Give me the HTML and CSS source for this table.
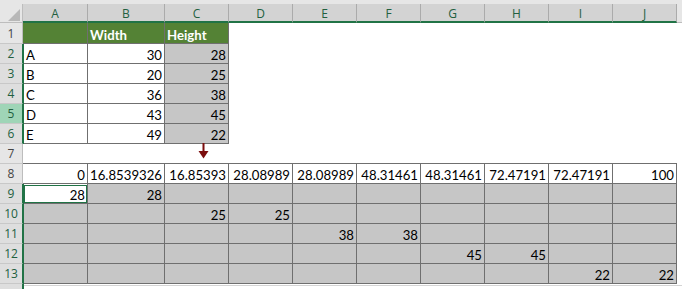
FILE: index.html
```html
<!DOCTYPE html>
<html lang="en">
<head>
    <meta charset="UTF-8">
    <meta name="viewport" content="width=device-width, initial-scale=1.0">
    <title>Planilha</title>
    <link rel="stylesheet" href="styles.css">
</head>
<body>
    <div class="planilha">
        <div class="faixa"></div>

        <!-- cabecalho das colunas -->
        <div class="canto"><span class="triangulo"></span></div>
        <div class="col-titulo">A</div>
        <div class="col-titulo">B</div>
        <div class="col-titulo">C</div>
        <div class="col-titulo">D</div>
        <div class="col-titulo">E</div>
        <div class="col-titulo">F</div>
        <div class="col-titulo">G</div>
        <div class="col-titulo">H</div>
        <div class="col-titulo">I</div>
        <div class="col-titulo">J</div>
        <div class="col-fim"></div>

        <!-- linha 1 -->
        <div class="lin-titulo">1</div>
        <div class="celula borda verde"></div>
        <div class="celula borda verde">Width</div>
        <div class="celula borda verde">Height</div>
        <div class="celula"></div><div class="celula"></div><div class="celula"></div><div class="celula"></div>
        <div class="celula"></div><div class="celula"></div><div class="celula"></div>
        <div class="celula"></div>

        <!-- linhas 2 a 6 -->
        <div class="lin-titulo sel">2</div>
        <div class="celula borda">A</div>
        <div class="celula borda num">30</div>
        <div class="celula borda num selecao">28</div>
        <div class="celula"></div><div class="celula"></div><div class="celula"></div><div class="celula"></div>
        <div class="celula"></div><div class="celula"></div><div class="celula"></div>
        <div class="celula"></div>

        <div class="lin-titulo sel">3</div>
        <div class="celula borda">B</div>
        <div class="celula borda num">20</div>
        <div class="celula borda num selecao">25</div>
        <div class="celula"></div><div class="celula"></div><div class="celula"></div><div class="celula"></div>
        <div class="celula"></div><div class="celula"></div><div class="celula"></div>
        <div class="celula"></div>

        <div class="lin-titulo sel">4</div>
        <div class="celula borda">C</div>
        <div class="celula borda num">36</div>
        <div class="celula borda num selecao">38</div>
        <div class="celula"></div><div class="celula"></div><div class="celula"></div><div class="celula"></div>
        <div class="celula"></div><div class="celula"></div><div class="celula"></div>
        <div class="celula"></div>

        <div class="lin-titulo sel destaque">5</div>
        <div class="celula borda">D</div>
        <div class="celula borda num">43</div>
        <div class="celula borda num selecao">45</div>
        <div class="celula"></div><div class="celula"></div><div class="celula"></div><div class="celula"></div>
        <div class="celula"></div><div class="celula"></div><div class="celula"></div>
        <div class="celula"></div>

        <div class="lin-titulo sel">6</div>
        <div class="celula borda">E</div>
        <div class="celula borda num">49</div>
        <div class="celula borda num selecao">22</div>
        <div class="celula"></div><div class="celula"></div><div class="celula"></div><div class="celula"></div>
        <div class="celula"></div><div class="celula"></div><div class="celula"></div>
        <div class="celula"></div>

        <!-- linha 7 (vazia) -->
        <div class="lin-titulo">7</div>
        <div class="celula base"></div><div class="celula base"></div><div class="celula base"></div>
        <div class="celula base"></div><div class="celula base"></div><div class="celula base"></div>
        <div class="celula base"></div><div class="celula base"></div><div class="celula base"></div>
        <div class="celula base"></div>
        <div class="celula"></div>

        <!-- linha 8 -->
        <div class="lin-titulo">8</div>
        <div class="celula borda num">0</div>
        <div class="celula borda num">16.8539326</div>
        <div class="celula borda num">16.85393</div>
        <div class="celula borda num">28.08989</div>
        <div class="celula borda num">28.08989</div>
        <div class="celula borda num">48.31461</div>
        <div class="celula borda num">48.31461</div>
        <div class="celula borda num">72.47191</div>
        <div class="celula borda num">72.47191</div>
        <div class="celula borda num">100</div>
        <div class="celula"></div>

        <!-- linhas 9 a 13 -->
        <div class="lin-titulo sel">9</div>
        <div class="celula borda num ativa">28</div>
        <div class="celula borda num selecao">28</div>
        <div class="celula borda num selecao"></div>
        <div class="celula borda num selecao"></div>
        <div class="celula borda num selecao"></div>
        <div class="celula borda num selecao"></div>
        <div class="celula borda num selecao"></div>
        <div class="celula borda num selecao"></div>
        <div class="celula borda num selecao"></div>
        <div class="celula borda num selecao"></div>
        <div class="celula"></div>

        <div class="lin-titulo sel">10</div>
        <div class="celula borda num selecao"></div>
        <div class="celula borda num selecao"></div>
        <div class="celula borda num selecao">25</div>
        <div class="celula borda num selecao">25</div>
        <div class="celula borda num selecao"></div>
        <div class="celula borda num selecao"></div>
        <div class="celula borda num selecao"></div>
        <div class="celula borda num selecao"></div>
        <div class="celula borda num selecao"></div>
        <div class="celula borda num selecao"></div>
        <div class="celula"></div>

        <div class="lin-titulo sel">11</div>
        <div class="celula borda num selecao"></div>
        <div class="celula borda num selecao"></div>
        <div class="celula borda num selecao"></div>
        <div class="celula borda num selecao"></div>
        <div class="celula borda num selecao">38</div>
        <div class="celula borda num selecao">38</div>
        <div class="celula borda num selecao"></div>
        <div class="celula borda num selecao"></div>
        <div class="celula borda num selecao"></div>
        <div class="celula borda num selecao"></div>
        <div class="celula"></div>

        <div class="lin-titulo sel">12</div>
        <div class="celula borda num selecao"></div>
        <div class="celula borda num selecao"></div>
        <div class="celula borda num selecao"></div>
        <div class="celula borda num selecao"></div>
        <div class="celula borda num selecao"></div>
        <div class="celula borda num selecao"></div>
        <div class="celula borda num selecao">45</div>
        <div class="celula borda num selecao">45</div>
        <div class="celula borda num selecao"></div>
        <div class="celula borda num selecao"></div>
        <div class="celula"></div>

        <div class="lin-titulo sel">13</div>
        <div class="celula borda num selecao"></div>
        <div class="celula borda num selecao"></div>
        <div class="celula borda num selecao"></div>
        <div class="celula borda num selecao"></div>
        <div class="celula borda num selecao"></div>
        <div class="celula borda num selecao"></div>
        <div class="celula borda num selecao"></div>
        <div class="celula borda num selecao"></div>
        <div class="celula borda num selecao">22</div>
        <div class="celula borda num selecao">22</div>
        <div class="celula"></div>

        <!-- inicio da linha 14, cortada -->
        <div class="lin-titulo sel rodape-titulo"></div>
        <div class="rodape"></div>

        <svg class="seta" width="11" height="16" viewBox="0 0 11 16">
            <rect x="4.5" y="0" width="2" height="9" fill="#7b0d0d"/>
            <polygon points="0.5,8 10.5,8 5.5,15.5" fill="#7b0d0d"/>
        </svg>
    </div>
</body>
</html>
```

FILE: styles.css
```css
* {
    box-sizing: border-box;
    margin: 0;
    padding: 0;
}

body {
    background-color: #fff;
    overflow: hidden;
}

.planilha {
    position: relative;
    display: grid;
    grid-template-columns: 23px 65px 77px repeat(8, 64px) 5px;
    grid-template-rows: 4px 19px 21px repeat(12, 20px) 5px;
    width: 682px;
    height: 289px;
    font-family: 'Lato', 'Liberation Sans', sans-serif;
    font-size: 13.2px;
    color: #000;
}

.faixa {
    grid-column: 1 / -1;
    background-color: #e6e6e6;
}

.canto {
    display: flex;
    justify-content: flex-end;
    align-items: flex-end;
    padding: 0 2px 1px 0;
    background-color: #e6e6e6;
    border-right: 1px solid #bdbdbd;
    border-bottom: 1px solid #bdbdbd;
}

.triangulo {
    width: 0;
    height: 0;
    border-left: 12px solid transparent;
    border-bottom: 12px solid #b8b8b8;
}

.col-titulo {
    display: flex;
    justify-content: center;
    align-items: center;
    padding-top: 1px;
    font-family: 'Open Sans', sans-serif;
    font-size: 12px;
    color: #22603f;
    background-color: #d3d3d3;
    border-right: 1px solid #ababab;
    border-bottom: 2px solid #217346;
}

.col-fim {
    background-color: #e6e6e6;
    border-bottom: 1px solid #bdbdbd;
}

.lin-titulo {
    display: flex;
    justify-content: center;
    align-items: flex-end;
    padding-bottom: 1px;
    line-height: 16px;
    font-family: 'Open Sans', sans-serif;
    font-size: 12px;
    color: #444;
    background-color: #e6e6e6;
    border-right: 1px solid #bdbdbd;
    border-bottom: 1px solid #c8c8c8;
}

.lin-titulo.sel {
    position: relative;
    z-index: 1;
    color: #22603f;
    background-color: #dedede;
    border-right-color: #217346;
    box-shadow: 1px 0 0 #217346;
}

.lin-titulo.destaque {
    background-color: #9fd5b7;
}

.rodape-titulo {
    border-bottom: none;
}

.rodape {
    grid-column: 2 / -1;
    background: linear-gradient(#fff 1px, #d4d4d4 1px, #d4d4d4 2px, #fff 2px);
}

.celula {
    display: flex;
    align-items: flex-end;
    padding: 0 2px 0 3px;
    line-height: 15px;
    white-space: nowrap;
    overflow: hidden;
}

.num {
    justify-content: flex-end;
}

.borda {
    border-right: 1px solid #6f6f6f;
    border-bottom: 1px solid #6f6f6f;
}

.base {
    border-bottom: 1px solid #6f6f6f;
}

.verde {
    background-color: #548235;
    color: #fff;
    font-weight: bold;
    padding-left: 2px;
}

.selecao {
    background-color: #c6c6c6;
}

.ativa {
    background-color: #fff;
    outline: 1px solid #217346;
    outline-offset: -2px;
}

.seta {
    position: absolute;
    left: 198px;
    top: 143px;
}
```
